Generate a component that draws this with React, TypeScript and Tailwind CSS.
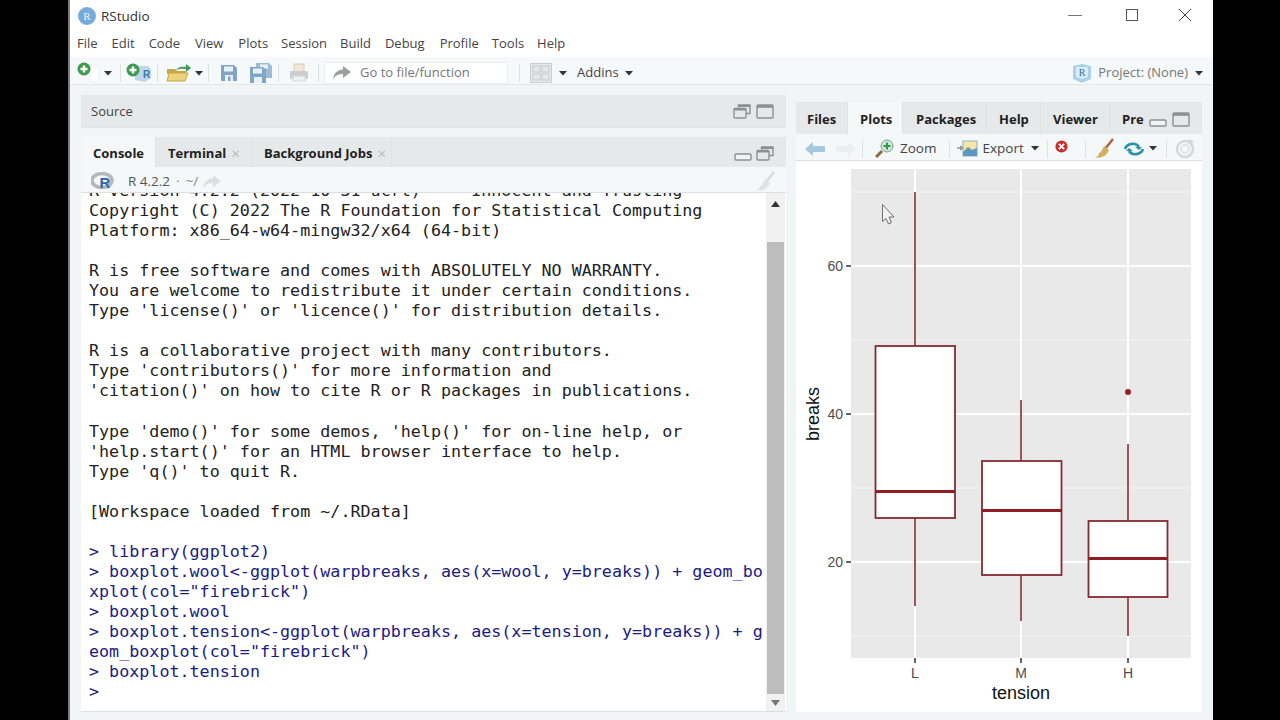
import React from "react";

const MENU = [
  { label: "File", ml: "ml-0" },
  { label: "Edit", ml: "ml-[14px]" },
  { label: "Code", ml: "ml-[14px]" },
  { label: "View", ml: "ml-[15px]" },
  { label: "Plots", ml: "ml-[15px]" },
  { label: "Session", ml: "ml-[13px]" },
  { label: "Build", ml: "ml-[13px]" },
  { label: "Debug", ml: "ml-[14px]" },
  { label: "Profile", ml: "ml-[15px]" },
  { label: "Tools", ml: "ml-[13px]" },
  { label: "Help", ml: "ml-[13px]" },
];

type Line = { t: string; input?: boolean };

const CONSOLE: Line[] = [
  { t: 'R version 4.2.2 (2022-10-31 ucrt) -- "Innocent and Trusting"' },
  { t: "Copyright (C) 2022 The R Foundation for Statistical Computing" },
  { t: "Platform: x86_64-w64-mingw32/x64 (64-bit)" },
  { t: "" },
  { t: "R is free software and comes with ABSOLUTELY NO WARRANTY." },
  { t: "You are welcome to redistribute it under certain conditions." },
  { t: "Type 'license()' or 'licence()' for distribution details." },
  { t: "" },
  { t: "R is a collaborative project with many contributors." },
  { t: "Type 'contributors()' for more information and" },
  { t: "'citation()' on how to cite R or R packages in publications." },
  { t: "" },
  { t: "Type 'demo()' for some demos, 'help()' for on-line help, or" },
  { t: "'help.start()' for an HTML browser interface to help." },
  { t: "Type 'q()' to quit R." },
  { t: "" },
  { t: "[Workspace loaded from ~/.RData]" },
  { t: "" },
  { t: "> library(ggplot2)", input: true },
  { t: "> boxplot.wool<-ggplot(warpbreaks, aes(x=wool, y=breaks)) + geom_bo", input: true },
  { t: 'xplot(col="firebrick")', input: true },
  { t: "> boxplot.wool", input: true },
  { t: "> boxplot.tension<-ggplot(warpbreaks, aes(x=tension, y=breaks)) + g", input: true },
  { t: 'eom_boxplot(col="firebrick")', input: true },
  { t: "> boxplot.tension", input: true },
  { t: ">", input: true },
];

const Caret = ({ className = "" }: { className?: string }) => (
  <svg width="8" height="5" viewBox="0 0 8 5" className={className}>
    <path d="M0 0h8L4 4.5z" fill="#333" />
  </svg>
);

const Sep = ({ className = "" }: { className?: string }) => (
  <div className={`w-px h-[18px] bg-[#dde1e2] ${className}`} />
);

const RLogo = ({ size = 18 }: { size?: number }) => (
  <svg width={size} height={size} viewBox="0 0 18 18">
    <circle cx="9" cy="9" r="9" fill="#75aadb" />
    <text x="9" y="13" fontSize="11" fontFamily="Liberation Serif, serif" fill="#e8f1f9" textAnchor="middle">
      R
    </text>
  </svg>
);

const NewFile = () => (
  <svg width="30" height="22" viewBox="0 0 30 22">
    <rect x="13" y="5" width="9" height="15" fill="#fff" stroke="#eef0f0" />
    <circle cx="7" cy="7" r="6.5" fill="#3d9a4e" />
    <path d="M7 3.5v7M3.5 7h7" stroke="#fff" strokeWidth="2.4" />
  </svg>
);

const NewProject = () => (
  <svg width="26" height="22" viewBox="0 0 26 22">
    <path d="M9 4h13l3 3v9l-6 4-10-2z" fill="#bcd9ea" />
    <circle cx="7" cy="8" r="6.5" fill="#3d9a4e" />
    <path d="M7 4.5v7M3.5 8h7" stroke="#fff" strokeWidth="2.4" />
    <text x="17" y="16" fontSize="10" fontWeight="700" fontFamily="Liberation Sans, sans-serif" fill="#3a78a8">
      R
    </text>
  </svg>
);

const OpenFolder = () => (
  <svg width="26" height="20" viewBox="0 0 26 20">
    <path d="M1 6h8l2 2h9v3H1z" fill="#c9a64a" />
    <path d="M1 18L3 10h19l-3 8z" fill="#ecd27c" stroke="#c9a64a" />
    <path d="M10 7c2-3 6-4 10-3V1l5 4-5 4V6c-4-.5-7 0-10 1z" fill="#3f9a52" />
  </svg>
);

const SaveIcon = () => (
  <svg width="18" height="18" viewBox="0 0 18 18">
    <path d="M1 1h13l3 3v13H1z" fill="#7fa6c6" />
    <rect x="4" y="2.5" width="9" height="5" fill="#eaf1f6" />
    <rect x="5" y="11" width="8" height="6" fill="#eaf1f6" />
    <rect x="8" y="12.5" width="2.5" height="4.5" fill="#7fa6c6" />
  </svg>
);

const SaveAll = () => (
  <svg width="22" height="20" viewBox="0 0 22 20">
    <path d="M6 0h13l3 3v12H6z" fill="#9dbcd4" />
    <rect x="10" y="1.5" width="8" height="4" fill="#eaf1f6" />
    <path d="M0 4h13l3 3v13H0z" fill="#7fa6c6" />
    <rect x="3" y="5.5" width="9" height="5" fill="#eaf1f6" />
    <rect x="4" y="14" width="8" height="6" fill="#eaf1f6" />
  </svg>
);

const Printer = () => (
  <svg width="20" height="20" viewBox="0 0 20 20">
    <rect x="5" y="1" width="10" height="8" fill="#f1e7d4" stroke="#d8cdb6" />
    <rect x="1" y="8" width="18" height="8" rx="1.5" fill="#c9ced2" />
    <rect x="4" y="13" width="12" height="5" fill="#f1f1f1" stroke="#d6d6d6" />
  </svg>
);

const GoArrow = ({ color = "#9aa0a4" }: { color?: string }) => (
  <svg width="18" height="14" viewBox="0 0 18 14">
    <path d="M10 0l8 6-8 6V8C6 8 3 9 0 13c1-6 4-9 10-9.5z" fill={color} />
  </svg>
);

const LayoutGrid = () => (
  <svg width="22" height="20" viewBox="0 0 22 20">
    <rect x="0.5" y="0.5" width="21" height="19" fill="#e6e9ea" stroke="#c9cdcf" />
    <rect x="3" y="3" width="7" height="6" fill="none" stroke="#c4c9cb" />
    <rect x="12" y="3" width="7" height="6" fill="none" stroke="#c4c9cb" />
    <rect x="3" y="11" width="7" height="6" fill="none" stroke="#c4c9cb" />
    <rect x="12" y="11" width="7" height="6" fill="none" stroke="#c4c9cb" />
  </svg>
);

const ProjectCube = () => (
  <svg width="18" height="19" viewBox="0 0 18 19">
    <path d="M0 2l9-2 9 2v13l-9 4-9-4z" fill="#a9d2e8" />
    <path d="M3 3h12v10l-6 2-6-2z" fill="#d8ecf6" />
    <text x="9" y="12" fontSize="10" fontFamily="Liberation Serif, serif" fill="#3a6f9c" textAnchor="middle">
      R
    </text>
  </svg>
);

const Restore = () => (
  <svg width="18" height="15" viewBox="0 0 18 15">
    <path d="M5.5 3.5V1H17v8.5h-4" fill="none" stroke="#8a9092" strokeWidth="1.4" />
    <path d="M5.5 2H17" stroke="#8a9092" strokeWidth="2" />
    <rect x="1" y="4.5" width="12" height="9.5" rx="1" fill="none" stroke="#8a9092" strokeWidth="1.4" />
    <path d="M1 5.5h12" stroke="#8a9092" strokeWidth="2" />
  </svg>
);

const Maximize = () => (
  <svg width="18" height="15" viewBox="0 0 18 15">
    <rect x="1" y="1" width="16" height="13" rx="1" fill="none" stroke="#8a9092" strokeWidth="1.4" />
    <path d="M1 2.5h16" stroke="#8a9092" strokeWidth="2.6" />
  </svg>
);

const Minimize = () => (
  <svg width="18" height="8" viewBox="0 0 18 8">
    <rect x="1" y="1" width="16" height="6" rx="1" fill="#f2f4f4" stroke="#8a9092" strokeWidth="1.4" />
  </svg>
);

const Broom = ({ faded = false }: { faded?: boolean }) => (
  <svg width="24" height="22" viewBox="0 0 24 22" opacity={faded ? 0.3 : 1}>
    <path d="M20 1L12 11" stroke={faded ? "#9a9a9a" : "#b0603f"} strokeWidth="2.4" />
    <path d="M11 8l5 4c-2 5-6 8-14 8 3-2 4-3 4-5 2 0 3-3 5-7z" fill={faded ? "#b5b5b5" : "#d2b060"} />
  </svg>
);

const RConsoleIcon = () => (
  <svg width="24" height="19" viewBox="0 0 24 19">
    <ellipse cx="11" cy="8.5" rx="10" ry="7" fill="none" stroke="#b4b8bc" strokeWidth="3.5" />
    <text x="14" y="16" fontSize="15" fontWeight="700" fontFamily="Liberation Sans, sans-serif" fill="#2a66ad" textAnchor="middle">
      R
    </text>
  </svg>
);

const Tab = ({ label, active = false, close = false, w }: { label: string; active?: boolean; close?: boolean; w: string }) => (
  <div
    className={`flex items-center h-full pt-[3px] font-bold text-[13px] text-[#222] border-r border-[#dfe3e3] ${w} ${
      active ? "bg-[#f5f8f8]" : ""
    }`}
  >
    <span>{label}</span>
    {close && <span className="ml-[5px] text-[15px] font-normal leading-none text-[#b5b9bb]">×</span>}
  </div>
);

// ggplot-style boxplot, drawn in page coordinates: y 60 -> 266, 20 -> 562
const BOXES = [
  { cx: 915, x0: 875.5, x1: 955, q3: 346, q1: 518, med: 491.5, top: 192, bottom: 606 },
  { cx: 1021, x0: 982, x1: 1061.5, q3: 461, q1: 575, med: 510.5, top: 400, bottom: 621 },
  { cx: 1128, x0: 1088.5, x1: 1167.5, q3: 521, q1: 597, med: 558.5, top: 444, bottom: 636 },
];

const Plot = () => (
  <svg width="406" height="551" viewBox="796 161 406 551" className="block">
    <rect x="851" y="169" width="340" height="489" fill="#e9e9e9" />
    {[192, 340, 488, 636].map((y) => (
      <line key={y} x1="851" x2="1191" y1={y} y2={y} stroke="#f6f6f6" strokeWidth="1" />
    ))}
    {[266, 414, 562].map((y) => (
      <line key={y} x1="851" x2="1191" y1={y} y2={y} stroke="#fff" strokeWidth="2" />
    ))}
    {BOXES.map((b) => (
      <line key={b.cx} x1={b.cx} x2={b.cx} y1="169" y2="658" stroke="#fff" strokeWidth="2" />
    ))}
    {BOXES.map((b) => (
      <g key={b.cx} stroke="#862a32" fill="none">
        <line x1={b.cx} x2={b.cx} y1={b.top} y2={b.bottom} strokeWidth="1.6" />
        <rect x={b.x0} y={b.q3} width={b.x1 - b.x0} height={b.q1 - b.q3} fill="#fff" strokeWidth="1.8" />
        <line x1={b.x0} x2={b.x1} y1={b.med} y2={b.med} stroke="#8f1d26" strokeWidth="3" />
      </g>
    ))}
    <circle cx="1128" cy="392" r="3" fill="#96202a" />
    <g fill="#4d4d4d" fontFamily="Liberation Sans, sans-serif" fontSize="14">
      {[
        [266, "60"],
        [414, "40"],
        [562, "20"],
      ].map(([y, l]) => (
        <g key={l}>
          <text x="843" y={Number(y) + 5} textAnchor="end">
            {l}
          </text>
          <line x1="846" x2="851" y1={y} y2={y} stroke="#333" strokeWidth="1.5" />
        </g>
      ))}
      {[
        [915, "L"],
        [1021, "M"],
        [1128, "H"],
      ].map(([x, l]) => (
        <g key={l}>
          <text x={x} y="678" textAnchor="middle">
            {l}
          </text>
          <line x1={x} x2={x} y1="658" y2="663" stroke="#333" strokeWidth="1.5" />
        </g>
      ))}
    </g>
    <text x="1021" y="699" textAnchor="middle" fontSize="18" fontFamily="Liberation Sans, sans-serif" fill="#111">
      tension
    </text>
    <text
      x="819"
      y="414"
      textAnchor="middle"
      fontSize="18"
      fontFamily="Liberation Sans, sans-serif"
      fill="#111"
      transform="rotate(-90 819 414)"
    >
      breaks
    </text>
    <path d="M882.5 204.5v17l3.5-3 2.5 5.5 3-1.5-2.5-5.5h5z" fill="#f2f2f2" stroke="#6e6e6e" strokeWidth="1" />
  </svg>
);

export default function App() {
  return (
    <div className="w-[1280px] h-[720px] bg-black overflow-hidden pl-[68px] pr-[67px] font-['Open_Sans',sans-serif]">
      <div className="h-full flex flex-col bg-white border-l-2 border-[#7d7d7d]">
        {/* title bar */}
        <div className="h-[31px] shrink-0 flex items-center pl-[8px] pt-px text-[13.5px] text-[#333]">
          <RLogo />
          <span className="ml-[5px]">RStudio</span>
          <div className="ml-auto flex items-center mb-[2px]">
            <div className="w-[14px] h-px bg-[#777] mr-[44px]" />
            <div className="w-[12px] h-[12px] border border-[#555] mr-[41px]" />
            <svg width="12" height="12" viewBox="0 0 12 12" className="mr-[22px]">
              <path d="M0 0l12 12M12 0L0 12" stroke="#444" strokeWidth="1" />
            </svg>
          </div>
        </div>

        {/* menu bar */}
        <div className="h-[26px] shrink-0 flex items-center pl-[7px] text-[13px] text-[#444]">
          {MENU.map((m) => (
            <span key={m.label} className={m.ml}>
              {m.label}
            </span>
          ))}
        </div>

        {/* global toolbar */}
        <div className="h-[28px] shrink-0 flex items-center pl-[7px] pt-[5px] bg-[#f6f9f9] border-b border-[#e3e7e8] text-[13px] text-[#555]">
          <NewFile />
          <Caret className="ml-[-3px]" />
          <Sep className="ml-[8px]" />
          <div className="ml-[5px] flex">
            <NewProject />
          </div>
          <Sep className="ml-[5px]" />
          <div className="ml-[8px] flex">
            <OpenFolder />
          </div>
          <Caret className="ml-[3px]" />
          <Sep className="ml-[5px]" />
          <div className="ml-[11px] flex">
            <SaveIcon />
          </div>
          <div className="ml-[12px] flex">
            <SaveAll />
          </div>
          <Sep className="ml-[6px]" />
          <div className="ml-[10px] flex">
            <Printer />
          </div>
          <Sep className="ml-[9px]" />
          <div className="ml-[5px] w-[184px] h-[22px] bg-white rounded-[3px] border border-[#eceff0] flex items-center pl-[8px] text-[#777]">
            <GoArrow />
            <span className="ml-[9px]">Go to file/function</span>
          </div>
          <Sep className="ml-[11px]" />
          <div className="ml-[10px] flex">
            <LayoutGrid />
          </div>
          <Caret className="ml-[7px]" />
          <span className="ml-[10px] text-[#444]">Addins</span>
          <Caret className="ml-[6px]" />
          <div className="ml-auto flex items-center mr-[10px] text-[#777]">
            <ProjectCube />
            <span className="ml-[7px]">Project: (None)</span>
            <Caret className="ml-[7px]" />
          </div>
        </div>

        {/* main area */}
        <div className="flex-1 min-h-0 flex bg-[#f2f5f5] pl-[11px] pb-[8px]">
          {/* left column */}
          <div className="w-[705px] flex flex-col pt-[10px]">
            <div className="h-[33px] shrink-0 flex items-center pl-[10px] pr-[12px] pt-px bg-[#e6e9e9] text-[13px] text-[#444] border-b border-[#dfe3e3]">
              <span>Source</span>
              <div className="ml-auto flex gap-[5px]">
                <Restore />
                <Maximize />
              </div>
            </div>
            <div className="h-[30px] mt-[9px] shrink-0 flex items-center bg-[#e6e9e9] pr-[12px]">
              <Tab label="Console" active w="w-[75px] pl-[12px]" />
              <Tab label="Terminal" close w="w-[96px] pl-[12px]" />
              <Tab label="Background Jobs" close w="w-[140px] pl-[12px]" />
              <div className="ml-auto flex items-end gap-[4px] pt-[3px]">
                <Minimize />
                <Restore />
              </div>
            </div>
            <div className="h-[26px] shrink-0 flex items-center pt-[4px] bg-[#f5f8f8] border-b border-[#dcdfdf] pl-[10px] pr-[8px] text-[13.5px] text-[#555]">
              <RConsoleIcon />
              <span className="ml-[13px]">R 4.2.2</span>
              <span className="ml-[6px] text-[#888]">·</span>
              <span className="ml-[6px] text-[#888]">~/</span>
              <div className="ml-[5px] flex opacity-40">
                <GoArrow color="#bbb" />
              </div>
              <div className="ml-auto flex">
                <Broom faded />
              </div>
            </div>
            <div className="flex-1 min-h-0 flex bg-white border-b border-[#dcdfdf]">
              <div className="flex-1 min-w-0 overflow-hidden pl-[8px] pt-px">
                <div className="mt-[-14px] font-['DejaVu_Sans_Mono',monospace] text-[16.72px] leading-[20.05px] whitespace-pre text-[#222]">
                  {CONSOLE.map((l, i) => (
                    <div key={i} className={`h-[20.05px] ${l.input ? "text-[#1b1b84]" : ""}`}>
                      {l.t}
                    </div>
                  ))}
                </div>
              </div>
              <div className="w-[19px] ml-px mr-px shrink-0 flex flex-col items-center bg-[#f1f1f1]">
                <div className="h-[49px] w-full flex items-start justify-center pt-[8px]">
                  <svg width="9" height="6" viewBox="0 0 9 6">
                    <path d="M0 6h9L4.5 0z" fill="#333" />
                  </svg>
                </div>
                <div className="w-[17px] h-[452px] bg-[#bdbdbd]" />
                <div className="flex-1 w-full flex items-center justify-center">
                  <svg width="9" height="6" viewBox="0 0 9 6">
                    <path d="M0 0h9L4.5 6z" fill="#777" />
                  </svg>
                </div>
              </div>
            </div>
          </div>

          {/* right column */}
          <div className="w-[406px] ml-[10px] flex flex-col pt-[17px]">
            <div className="h-[32px] shrink-0 flex items-center bg-[#e6e9e9] pr-[12px]">
              <Tab label="Files" w="w-[52px] pl-[11px]" />
              <Tab label="Plots" active w="w-[55px] pl-[12px]" />
              <Tab label="Packages" w="w-[84px] pl-[13px]" />
              <Tab label="Help" w="w-[54px] pl-[12px]" />
              <Tab label="Viewer" w="w-[69px] pl-[12px]" />
              <span className="ml-[12px] pt-[3px] font-bold text-[13px] text-[#222]">Pre</span>
              <div className="ml-auto flex items-end gap-[5px] pt-[3px]">
                <Minimize />
                <Maximize />
              </div>
            </div>
            <div className="h-[27px] shrink-0 flex items-center pt-[3px] bg-[#f5f8f8] border-b border-[#dcdfdf] pl-[9px] text-[13.5px] text-[#444]">
              <svg width="20" height="14" viewBox="0 0 20 14">
                <path d="M0 7l8-7v4h12v6H8v4z" fill="#a5c8de" />
              </svg>
              <svg width="20" height="14" viewBox="0 0 20 14" className="ml-[11px]">
                <path d="M20 7l-8-7v4H0v6h12v4z" fill="#eaeeef" />
              </svg>
              <Sep className="ml-[6px]" />
              <svg width="20" height="20" viewBox="0 0 20 20" className="ml-[12px]">
                <path d="M7 12L1 18" stroke="#8a6d3b" strokeWidth="3" />
                <circle cx="12" cy="7" r="6" fill="#cfe8d6" stroke="#7f9a9a" />
                <path d="M12 3.5v7M8.5 7h7" stroke="#2f9a4e" strokeWidth="2" />
              </svg>
              <span className="ml-[5px]">Zoom</span>
              <Sep className="ml-[13px]" />
              <svg width="21" height="18" viewBox="0 0 21 18" className="ml-[7px]">
                <path d="M0 8h5M3 6l3 2-3 2" stroke="#666" fill="none" />
                <rect x="6" y="1" width="14" height="15" fill="#f4e6a8" stroke="#8fb4cc" />
                <path d="M6 12l5-5 4 3 5-2v8H6z" fill="#5f96bf" />
              </svg>
              <span className="ml-[4px]">Export</span>
              <Caret className="ml-[7px]" />
              <Sep className="ml-[8px]" />
              <svg width="13" height="13" viewBox="0 0 15 15" className="ml-[7px] mb-[4px]">
                <circle cx="7.5" cy="7.5" r="7" fill="#c92f2f" />
                <path d="M4.5 4.5l6 6M10.5 4.5l-6 6" stroke="#fff" strokeWidth="2.2" />
              </svg>
              <Sep className="ml-[17px]" />
              <div className="ml-[7px] flex">
                <Broom />
              </div>
              <svg width="22" height="16" viewBox="0 0 22 16" className="ml-[6px]">
                <path d="M2 8c2-6 11-7 14-2M20 8c-2 6-11 7-14 2" fill="none" stroke="#2b8fb0" strokeWidth="2.6" />
                <path d="M12 6h7l-3 3zM10 10H3l3-3z" fill="#2b8fb0" />
              </svg>
              <Caret className="ml-[4px]" />
              <Sep className="ml-[9px]" />
              <svg width="20" height="20" viewBox="0 0 20 20" className="ml-[8px]">
                <circle cx="10" cy="10" r="8" fill="none" stroke="#d3d8da" strokeWidth="2.5" />
                <circle cx="10" cy="10" r="4" fill="none" stroke="#e0e4e5" strokeWidth="2" />
                <path d="M13 0l6 2-3 5z" fill="#d3d8da" />
              </svg>
            </div>
            <div className="flex-1 min-h-0 bg-white">
              <Plot />
            </div>
          </div>
        </div>
      </div>
    </div>
  );
}
